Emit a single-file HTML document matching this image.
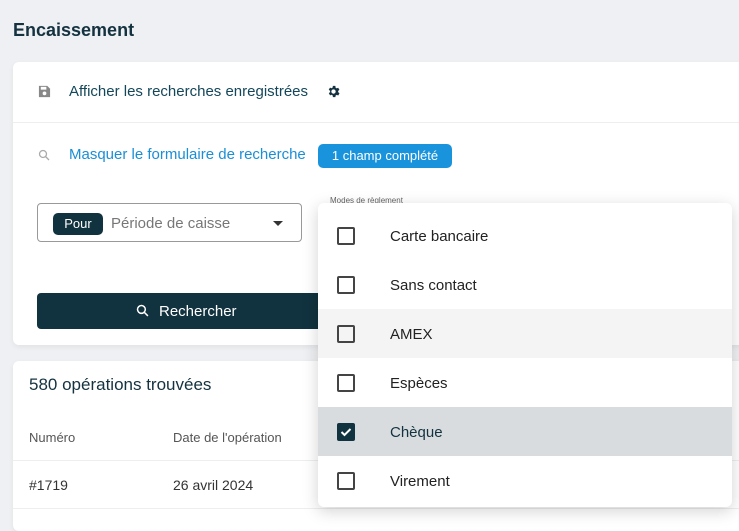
<!DOCTYPE html>
<html><head><meta charset="utf-8"><style>
*{box-sizing:border-box;margin:0;padding:0}
body{width:739px;height:518px;overflow:hidden;background:#eef0f3;font-family:"Liberation Sans",sans-serif;position:relative;color:#14323f}
.abs{position:absolute}
h1{position:absolute;left:13px;top:20px;font-size:18px;font-weight:bold;color:#14323f}
.card{position:absolute;background:#fff;border-radius:6px;box-shadow:0 2px 6px rgba(0,0,0,.06)}
.t{position:absolute;white-space:nowrap}
.dd{position:absolute;left:318px;top:203px;width:414px;height:304px;background:#fff;border-radius:6px;box-shadow:0 4px 16px rgba(0,0,0,.18);overflow:hidden}
.row{position:absolute;left:0;width:414px;height:49px}
.cb{position:absolute;left:19px;top:16px;width:18px;height:18px;border:2px solid #444;border-radius:2px}
.lbl{position:absolute;left:72px;top:17px;font-size:15px;color:#222}
</style></head><body>
<h1>Encaissement</h1>
<div class="card" style="left:13px;top:62px;width:740px;height:283px">
 <svg class="abs" style="left:25px;top:23px" width="13" height="13" viewBox="0 0 14 14"><path d="M1 1h9l3 3v9H1z" fill="#888"/><rect x="3" y="2" width="6" height="3" fill="#fff"/><circle cx="7" cy="9" r="2" fill="#fff"/></svg>
 <div class="t" style="left:56px;top:21px;font-size:15px;color:#14475a">Afficher les recherches enregistrées</div>
 <svg class="abs" style="left:313px;top:22px" width="15" height="15" viewBox="0 0 24 24"><path fill="#14323f" d="M19.4 13a7.5 7.5 0 0 0 0-2l2.1-1.6-2-3.5-2.5 1a7 7 0 0 0-1.7-1L15 3h-4l-.4 2.7a7 7 0 0 0-1.7 1l-2.5-1-2 3.5L6.6 11a7.5 7.5 0 0 0 0 2l-2.1 1.6 2 3.5 2.5-1a7 7 0 0 0 1.7 1L11 21h4l.4-2.7a7 7 0 0 0 1.7-1l2.5 1 2-3.5zM12 15.5a3.5 3.5 0 1 1 0-7 3.5 3.5 0 0 1 0 7z"/></svg>
 <div class="abs" style="left:0;top:60px;width:740px;height:1px;background:#eceef0"></div>
 <svg class="abs" style="left:25px;top:87px" width="12" height="12" viewBox="0 0 12 12"><circle cx="5" cy="5" r="3.5" fill="none" stroke="#aaa" stroke-width="1.3"/><path d="M7.5 7.5L11 11" stroke="#aaa" stroke-width="1.3"/></svg>
 <div class="t" style="left:56px;top:84px;font-size:15px;color:#1a8fd6">Masquer le formulaire de recherche</div>
 <div class="t" style="left:305px;top:82px;width:134px;height:24px;background:#1a93dd;border-radius:5px;color:#fff;font-size:13px;text-align:center;line-height:24px">1 champ complété</div>
 <div class="abs" style="left:24px;top:141px;width:265px;height:39px;border:1px solid #999;border-radius:4px"></div>
 <div class="t" style="left:40px;top:151px;width:50px;height:22px;background:#11323f;color:#fff;border-radius:5px;font-size:13px;text-align:center;line-height:22px">Pour</div>
 <div class="t" style="left:98px;top:153px;font-size:15px;color:#777">Période de caisse</div>
 <div class="abs" style="left:260px;top:159px;border-left:5px solid transparent;border-right:5px solid transparent;border-top:5px solid #333"></div>
 <div class="abs" style="left:24px;top:231px;width:320px;height:36px;background:#11323f;border-radius:4px"></div>
 <svg class="abs" style="left:123px;top:242px" width="13" height="13" viewBox="0 0 12 12"><circle cx="5" cy="5" r="3.6" fill="none" stroke="#fff" stroke-width="1.4"/><path d="M7.6 7.6L11 11" stroke="#fff" stroke-width="1.4"/></svg>
 <div class="t" style="left:146px;top:241px;font-size:15px;color:#fff">Rechercher</div>
</div>
<div class="card" style="left:13px;top:361px;width:740px;height:170px">
 <div class="t" style="left:16px;top:14px;font-size:17px;color:#14323f">580 opérations trouvées</div>
 <div class="t" style="left:16px;top:69px;font-size:13px;color:#555">Numéro</div>
 <div class="t" style="left:160px;top:69px;font-size:13px;color:#555">Date de l'opération</div>
 <div class="abs" style="left:0;top:99px;width:740px;height:1px;background:#eceef0"></div>
 <div class="t" style="left:16px;top:116px;font-size:14px;color:#333">#1719</div>
 <div class="t" style="left:160px;top:116px;font-size:14px;color:#333">26 avril 2024</div>
 <div class="abs" style="left:0;top:147px;width:740px;height:1px;background:#eceef0"></div>
</div>
<div class="t" style="left:330px;top:196px;font-size:8px;color:#666">Modes de règlement</div>
<div class="dd">
 <div class="row" style="top:8px"><div class="cb"></div><div class="lbl">Carte bancaire</div></div>
 <div class="row" style="top:57px"><div class="cb"></div><div class="lbl">Sans contact</div></div>
 <div class="row" style="top:106px;background:#f4f4f4"><div class="cb"></div><div class="lbl">AMEX</div></div>
 <div class="row" style="top:155px"><div class="cb"></div><div class="lbl">Espèces</div></div>
 <div class="row" style="top:204px;background:#d8dcdf"><div class="cb" style="background:#11323f;border-color:#11323f"><svg width="14" height="14" viewBox="0 0 14 14" style="position:absolute;left:0;top:0"><path d="M2.5 7l3 3 6-6" fill="none" stroke="#fff" stroke-width="2"/></svg></div><div class="lbl" style="color:#14323f">Chèque</div></div>
 <div class="row" style="top:253px"><div class="cb"></div><div class="lbl">Virement</div></div>
</div>
</body></html>
